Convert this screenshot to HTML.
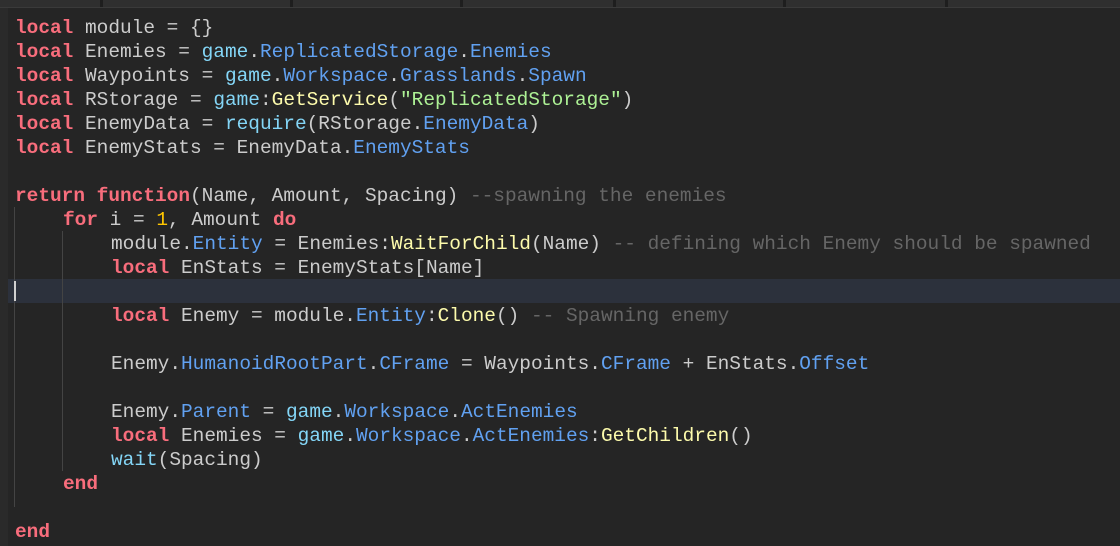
<!DOCTYPE html>
<html><head><meta charset="utf-8"><style>
html,body{margin:0;padding:0;}
body{width:1120px;height:546px;background:#252525;overflow:hidden;position:relative;font-family:"Liberation Mono","DejaVu Sans Mono",monospace;font-size:19.45px;color:#cccccc;}
.top{position:absolute;left:0;top:0;width:1120px;height:7px;background:#2f2f2f;border-bottom:1px solid #3a3a3a;}
.tab{position:absolute;top:0;height:7px;width:3px;background:#1e1e1e;}
.gut{position:absolute;left:0;top:8px;width:8px;height:538px;background:#2a2a2a;}
.hl{position:absolute;left:8px;top:279px;width:1112px;height:24px;background:#2c313c;}
.cur{position:absolute;left:14px;top:281px;width:2px;height:20px;background:#d0d0d0;}
.g{position:absolute;width:1px;background:#444;}
.l{position:absolute;left:15px;height:24px;line-height:24px;white-space:pre;}
.k{color:#f86d7c;font-weight:bold;}
.b{color:#84d6f7;}
.p{color:#61a1f1;}
.m{color:#fdfbac;}
.n{color:#ffc600;}
.s{color:#adf195;}
.c{color:#666666;}
</style></head><body>
<div class="top"></div>
<div class="tab" style="left:100px"></div><div class="tab" style="left:290px"></div><div class="tab" style="left:460px"></div><div class="tab" style="left:613px"></div><div class="tab" style="left:783px"></div><div class="tab" style="left:945px"></div>
<div class="gut"></div>
<div class="hl"></div>
<div class="g" style="left:14px;top:207px;height:300px"></div>
<div class="g" style="left:62px;top:231px;height:240px"></div>
<div class="cur"></div>
<div class="l" style="top:16px"><span class="k">local</span> module = {}</div>
<div class="l" style="top:40px"><span class="k">local</span> Enemies = <span class="b">game</span>.<span class="p">ReplicatedStorage</span>.<span class="p">Enemies</span></div>
<div class="l" style="top:64px"><span class="k">local</span> Waypoints = <span class="b">game</span>.<span class="p">Workspace</span>.<span class="p">Grasslands</span>.<span class="p">Spawn</span></div>
<div class="l" style="top:88px"><span class="k">local</span> RStorage = <span class="b">game</span>:<span class="m">GetService</span>(<span class="s">"ReplicatedStorage"</span>)</div>
<div class="l" style="top:112px"><span class="k">local</span> EnemyData = <span class="b">require</span>(RStorage.<span class="p">EnemyData</span>)</div>
<div class="l" style="top:136px"><span class="k">local</span> EnemyStats = EnemyData.<span class="p">EnemyStats</span></div>
<div class="l" style="top:184px"><span class="k">return</span> <span class="k">function</span>(Name, Amount, Spacing) <span class="c">--spawning the enemies</span></div>
<div class="l" style="top:208px;left:63px"><span class="k">for</span> i = <span class="n">1</span>, Amount <span class="k">do</span></div>
<div class="l" style="top:232px;left:111px">module.<span class="p">Entity</span> = Enemies:<span class="m">WaitForChild</span>(Name) <span class="c">-- defining which Enemy should be spawned</span></div>
<div class="l" style="top:256px;left:111px"><span class="k">local</span> EnStats = EnemyStats[Name]</div>
<div class="l" style="top:304px;left:111px"><span class="k">local</span> Enemy = module.<span class="p">Entity</span>:<span class="m">Clone</span>() <span class="c">-- Spawning enemy</span></div>
<div class="l" style="top:352px;left:111px">Enemy.<span class="p">HumanoidRootPart</span>.<span class="p">CFrame</span> = Waypoints.<span class="p">CFrame</span> + EnStats.<span class="p">Offset</span></div>
<div class="l" style="top:400px;left:111px">Enemy.<span class="p">Parent</span> = <span class="b">game</span>.<span class="p">Workspace</span>.<span class="p">ActEnemies</span></div>
<div class="l" style="top:424px;left:111px"><span class="k">local</span> Enemies = <span class="b">game</span>.<span class="p">Workspace</span>.<span class="p">ActEnemies</span>:<span class="m">GetChildren</span>()</div>
<div class="l" style="top:448px;left:111px"><span class="b">wait</span>(Spacing)</div>
<div class="l" style="top:472px;left:63px"><span class="k">end</span></div>
<div class="l" style="top:520px"><span class="k">end</span></div>
</body></html>
